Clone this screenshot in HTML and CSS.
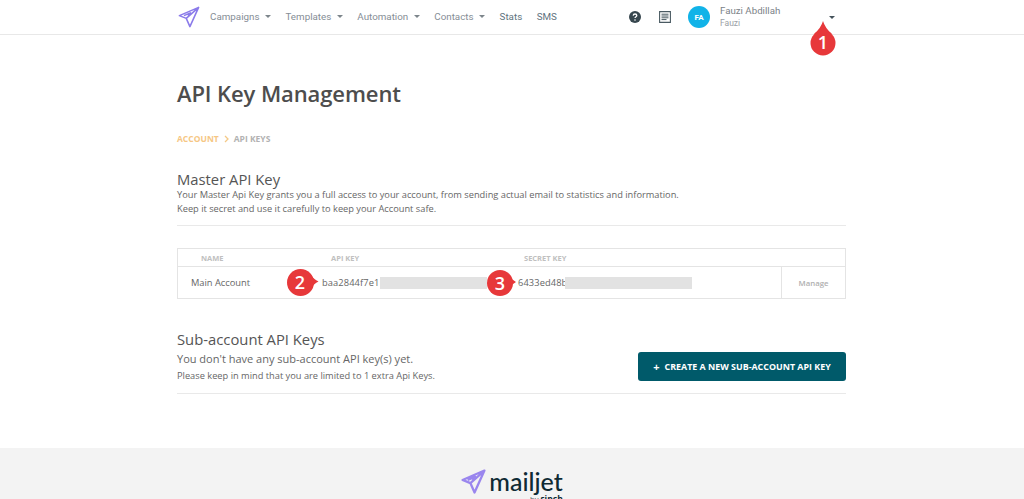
FILE: index.html
```html
<!DOCTYPE html>
<html lang="en">
<head>
<meta charset="utf-8">
<title>API Key Management</title>
<link rel="stylesheet" href="styles.css">
</head>
<body>
<header class="topbar">
  <div class="topbar-inner">
    <svg class="nav-logo" viewBox="0 0 24 24" width="22" height="22"><path d="M22.500 1.500 1.500 10.500l7.500 3 4 9zM22.500 1.500 9 13.500M6.500 10.500l7-3-2.500 3" fill="none" stroke="#8b7bea" stroke-width="1.700" stroke-linejoin="round"/></svg>
    <nav class="nav">
      <a class="nav-item">Campaigns<i class="caret"></i></a>
      <a class="nav-item">Templates<i class="caret"></i></a>
      <a class="nav-item">Automation<i class="caret"></i></a>
      <a class="nav-item">Contacts<i class="caret"></i></a>
      <a class="nav-item strong">Stats</a>
      <a class="nav-item strong">SMS</a>
    </nav>
    <div class="tools">
      <svg class="tool-help" viewBox="0 0 12 12" width="12" height="12"><circle cx="6" cy="6" r="6" fill="#37474f"/><path d="M4.200 4.600C4.300 3.600 5 3 6 3s1.800.6 1.800 1.500C7.800 5.800 6 5.600 6 7.100" fill="none" stroke="#fff" stroke-width="1.300"/><circle cx="6" cy="9" r=".8" fill="#fff"/></svg>
      <svg class="tool-news" viewBox="0 0 12 12" width="12" height="12"><path d="M.6.6h10.800v10.800H.6z" fill="none" stroke="#4a5a62" stroke-width="1.100"/><path d="M2.500 3.200h7M2.500 5h7M2.500 6.800h7M2.500 8.600h5" stroke="#4a5a62"/></svg>
      <span class="avatar">FA</span>
      <div class="user">
        <div class="user-name">Fauzi Abdillah</div>
        <div class="user-sub">Fauzi</div>
      </div>
      <i class="caret dark"></i>
    </div>
  </div>
</header>

<main class="content">
  <h1 class="title">API Key Management</h1>
  <div class="crumbs"><span class="crumb-on">ACCOUNT</span><svg class="crumb-sep" viewBox="0 0 5 8" width="5" height="8"><path d="M1 1l3 3-3 3" fill="none" stroke="#f4c987" stroke-width="1.300"/></svg><span>API KEYS</span></div>

  <section class="master">
    <h2 class="section-title">Master API Key</h2>
    <p class="desc">Your Master Api Key grants you a full access to your account, from sending actual email to statistics and information.</p>
    <p class="desc">Keep it secret and use it carefully to keep your Account safe.</p>
  </section>

  <div class="keys">
    <div class="keys-head">
      <span class="col-name">NAME</span>
      <span class="col-api">API KEY</span>
      <span class="col-secret">SECRET KEY</span>
    </div>
    <div class="keys-row">
      <span class="cell-name">Main Account</span>
      <span class="cell-api"><span class="key key-api">baa2844f7e1</span><i class="blur blur-api"></i></span>
      <span class="cell-secret"><span class="key key-secret">6433ed48b</span><i class="blur blur-secret"></i></span>
      <span class="cell-manage">Manage</span>
    </div>
  </div>

  <section class="sub">
    <div class="sub-text">
      <h2 class="section-title">Sub-account API Keys</h2>
      <p class="sub-lead">You don't have any sub-account API key(s) yet.</p>
      <p class="sub-note">Please keep in mind that you are limited to 1 extra Api Keys.</p>
    </div>
    <button class="create"><span class="plus">+</span>CREATE A NEW SUB-ACCOUNT API KEY</button>
  </section>
</main>

<footer class="footer">
  <div class="brand">
    <svg class="brand-mark" viewBox="0 0 24 24" width="25" height="25"><path d="M22.500 1.500 1.500 10.500l7.500 3 4 9zM22.500 1.500 9 13.500M6.500 10.500l7-3-2.500 3" fill="none" stroke="#9a86ee" stroke-width="2.200" stroke-linejoin="round"/></svg>
    <div class="brand-text">
      <span class="brand-name">mailjet</span>
      <span class="brand-by">by <b>sinch</b></span>
    </div>
  </div>
</footer>

<svg class="pin pin-1" viewBox="0 0 26 35" width="26" height="35"><circle cx="13" cy="22" r="12.500" fill="#e7383a"/><path d="M13 0Q15 7 22 13H4Q11 7 13 0z" fill="#e7383a"/></svg>
<span class="pin-num num-1">1</span>
<svg class="pin pin-2" viewBox="0 0 32 27" width="32" height="27"><circle cx="13.500" cy="13.500" r="13.500" fill="#e7383a"/><path d="M31.500 12.500Q27 14.500 23 20V5Q27 10.500 31.500 12.500z" fill="#e7383a"/></svg>
<span class="pin-num num-2">2</span>
<svg class="pin pin-3" viewBox="0 0 29 26" width="29" height="26"><circle cx="13" cy="13" r="13" fill="#e7383a"/><path d="M29 12Q25 14 21 19V5Q25 10 29 12z" fill="#e7383a"/></svg>
<span class="pin-num num-3">3</span>
</body>
</html>
```
FILE: styles.css
```css
* { box-sizing: border-box; }
html, body { margin: 0; padding: 0; }
body {
  position: relative;
  height: 499px;
  overflow: hidden;
  background: #fff;
  font-family: "Open Sans", "Liberation Sans", sans-serif;
  color: #555;
  display: flex;
  flex-direction: column;
}
p, h1, h2 { margin: 0; font-weight: 400; }

.topbar { height: 35px; flex: none; border-bottom: 1px solid #e8e8e8; }
.topbar-inner { margin-left: 177px; width: 669px; height: 33px; display: flex; align-items: center; }
.nav-logo { flex: none; margin: 1px 0 0 1px; }
.nav { display: flex; margin-left: 10px; font-family: Roboto, sans-serif; font-size: 9.800px; color: #868e96; }
.nav-item { display: flex; align-items: center; margin-right: 14.500px; }
.nav-item.strong { color: #5f7480; }
.caret { width: 0; height: 0; margin-left: 5.500px; border: 3px solid transparent; border-top: 3.500px solid #7d858b; border-bottom: 0; }
.caret.dark { border-top-color: #44525a; margin-left: auto; margin-right: 11px; margin-top: 1px; }
.tools { display: flex; align-items: center; margin-left: auto; width: 217px; }
.tool-news { margin-left: 18px; }
.avatar { width: 22px; height: 22px; margin-left: 17px; margin-top: 1px; border-radius: 50%; background: #11b3e8; color: #fff; font: 700 8px Roboto, sans-serif; display: flex; align-items: center; justify-content: center; }
.user { margin-left: 10px; font-family: Roboto, sans-serif; }
.user-name { font-size: 9.700px; color: #7b8288; line-height: 13px; }
.user-sub { font-size: 8.500px; color: #9aa0a5; line-height: 13px; }

.content { width: 669px; margin-left: 177px; flex: 1; }
.title { font-size: 22px; font-weight: 600; letter-spacing: -.1px; color: #4d4d4d; line-height: 32px; margin-top: 42px; }
.crumbs { display: flex; align-items: center; margin-top: 24px; font-size: 8.500px; font-weight: 700; color: #b2b2b2; line-height: 12px; }
.crumb-on { color: #f6c784; }
.crumb-sep { margin: 0 5px 0 5px; }

.master { margin-top: 25px; padding-bottom: 9px; border-bottom: 1px solid #e9e9e9; }
.section-title { font-size: 14.800px; line-height: 18px; color: #555; }
.desc { font-size: 9.280px; line-height: 14px; color: #666; }

.keys { margin-top: 22px; border: 1px solid #e4e4e4; }
.keys-head { display: flex; height: 18px; align-items: center; border-bottom: 1px solid #e4e4e4; font-size: 7.500px; font-weight: 700; color: #c0c0c0; }
.col-name { margin-left: 23px; width: 130px; }
.col-api { width: 193px; }
.keys-row { display: flex; height: 31px; align-items: center; font-size: 9.300px; color: #666; }
.cell-name { margin-left: 13px; width: 131px; }
.cell-api { width: 196px; display: flex; align-items: center; }
.cell-secret { width: 263px; display: flex; align-items: center; }
.key { display: block; white-space: nowrap; letter-spacing: .1px; }
.key-api { width: 58px; }
.key-secret { width: 47px; }
.blur { display: block; position: relative; height: 12px; background: #e2e2e2; }
.blur-api { width: 107px; }
.blur-secret { width: 127px; }
.cell-manage { align-self: stretch; flex: 1; border-left: 1px solid #e4e4e4; display: flex; align-items: center; justify-content: center; font-size: 7.800px; font-weight: 600; color: #b0b0b0; }

.sub { margin-top: 31px; padding-bottom: 10px; border-bottom: 1px solid #e9e9e9; display: flex; justify-content: space-between; align-items: flex-end; }
.sub-text .section-title { line-height: 20px; margin-top: -1px; }
.sub-lead { font-size: 11px; line-height: 18px; color: #666; margin-top: 1px; }
.sub-note { font-size: 9.270px; line-height: 14px; color: #666; margin-top: 1px; }
.create { width: 208px; height: 29px; margin-bottom: 2px; border: 0; border-radius: 3px; background: #005a6a; color: #fff; font: 700 8.900px "Open Sans", sans-serif; display: flex; align-items: center; justify-content: center; padding: 0; }
.plus { font-size: 11px; margin-right: 5px; }

.footer { height: 51px; flex: none; background: #f3f3f3; display: flex; justify-content: center; padding-top: 21px; overflow: hidden; }
.brand { display: flex; align-items: flex-start; height: 40px; }
.brand-mark { margin-right: 3px; }
.brand-text { display: flex; flex-direction: column; align-items: flex-end; }
.brand-name { font: 500 25px/25px Lato, sans-serif; color: #0f2a33; }
.brand-by { font: 400 7.500px/9px "Open Sans", sans-serif; color: #555; }
.brand-by b { color: #0f2a33; font-size: 8.500px; }

.pin { position: absolute; }
.pin-1 { left: 810px; top: 21px; }
.pin-2 { left: 287px; top: 269px; }
.pin-3 { left: 487px; top: 270px; }
.pin-num { position: absolute; width: 26px; text-align: center; color: #fff; font: 600 18px/26px "Open Sans", sans-serif; }
.num-1 { left: 810px; top: 29px; }
.num-2 { left: 287px; top: 269px; }
.num-3 { left: 487px; top: 270px; }
```
